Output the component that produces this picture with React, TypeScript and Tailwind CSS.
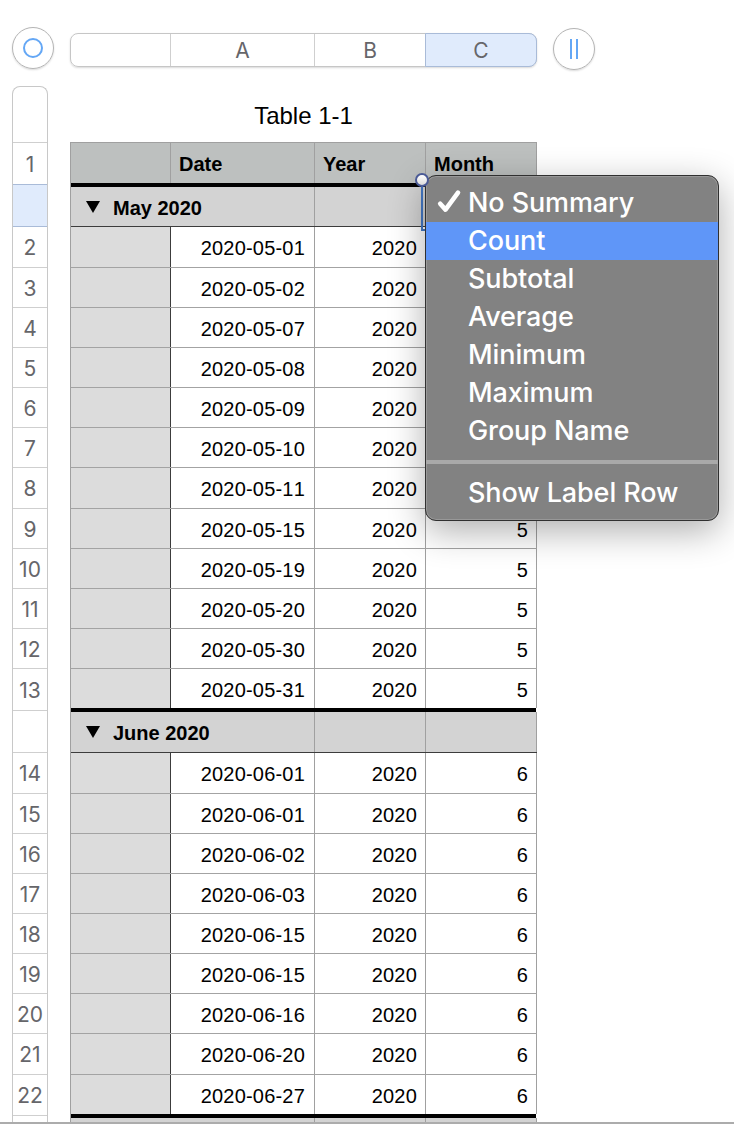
interface DataRow {
  n: number
  date: string
  year: number
  month: number
  // height of the table row
  h: string
  // height of the matching cell in the row-number gutter
  gutter: string
}

interface Group {
  name: string
  selected?: boolean
  h: string
  rows: DataRow[]
}

const groups: Group[] = [
  {
    name: 'May 2020',
    selected: true,
    h: 'h-10',
    rows: [
      { n: 2, date: '2020-05-01', year: 2020, month: 5, h: 'h-[41px]', gutter: 'h-[41px]' },
      { n: 3, date: '2020-05-02', year: 2020, month: 5, h: 'h-10', gutter: 'h-10' },
      { n: 4, date: '2020-05-07', year: 2020, month: 5, h: 'h-10', gutter: 'h-10' },
      { n: 5, date: '2020-05-08', year: 2020, month: 5, h: 'h-10', gutter: 'h-10' },
      { n: 6, date: '2020-05-09', year: 2020, month: 5, h: 'h-10', gutter: 'h-10' },
      { n: 7, date: '2020-05-10', year: 2020, month: 5, h: 'h-10', gutter: 'h-10' },
      { n: 8, date: '2020-05-11', year: 2020, month: 5, h: 'h-[41px]', gutter: 'h-[41px]' },
      { n: 9, date: '2020-05-15', year: 2020, month: 5, h: 'h-10', gutter: 'h-10' },
      { n: 10, date: '2020-05-19', year: 2020, month: 5, h: 'h-10', gutter: 'h-10' },
      { n: 11, date: '2020-05-20', year: 2020, month: 5, h: 'h-10', gutter: 'h-10' },
      { n: 12, date: '2020-05-30', year: 2020, month: 5, h: 'h-10', gutter: 'h-10' },
      { n: 13, date: '2020-05-31', year: 2020, month: 5, h: 'h-[39px]', gutter: 'h-[42px]' },
    ],
  },
  {
    name: 'June 2020',
    h: 'h-[41px]',
    rows: [
      { n: 14, date: '2020-06-01', year: 2020, month: 6, h: 'h-[41px]', gutter: 'h-[41px]' },
      { n: 15, date: '2020-06-01', year: 2020, month: 6, h: 'h-10', gutter: 'h-10' },
      { n: 16, date: '2020-06-02', year: 2020, month: 6, h: 'h-10', gutter: 'h-10' },
      { n: 17, date: '2020-06-03', year: 2020, month: 6, h: 'h-10', gutter: 'h-10' },
      { n: 18, date: '2020-06-15', year: 2020, month: 6, h: 'h-10', gutter: 'h-10' },
      { n: 19, date: '2020-06-15', year: 2020, month: 6, h: 'h-10', gutter: 'h-10' },
      { n: 20, date: '2020-06-16', year: 2020, month: 6, h: 'h-10', gutter: 'h-10' },
      { n: 21, date: '2020-06-20', year: 2020, month: 6, h: 'h-[41px]', gutter: 'h-[41px]' },
      { n: 22, date: '2020-06-27', year: 2020, month: 6, h: 'h-[39px]', gutter: 'h-[41px]' },
    ],
  },
]

const summaryItems = ['No Summary', 'Count', 'Subtotal', 'Average', 'Minimum', 'Maximum', 'Group Name']

// the open menu covers the month column down to this row
const LAST_COVERED_ROW = 8

function ColumnHeader() {
  return (
    <div className="ml-4 mt-[33px] flex h-[34px] w-[467px] rounded-[8px] border border-[#c6c6c6] font-['Inter',sans-serif] text-[21px] text-[#66666a] shadow-[0_1px_2px_rgba(0,0,0,0.15)]">
      <div className="w-[100px] border-r border-[#cfcfcf]" />
      <div className="flex w-36 items-center justify-center border-r border-[#cfcfcf] pt-0.5">A</div>
      <div className="flex w-[110px] items-center justify-center pt-0.5">B</div>
      <div className="-my-px -mr-px flex w-28 items-center justify-center rounded-r-[8px] border border-[#a9bbd8] bg-[#e0ebfc] pt-0.5">
        C
      </div>
    </div>
  )
}

function RowGutter() {
  return (
    <div className="ml-3 flex h-[1036px] w-9 flex-col overflow-hidden rounded-t-[8px] border-x border-t border-[#c8c8c8] font-['Inter',sans-serif] text-[21px] text-[#66666a] [font-kerning:none]">
      <div className="h-14 shrink-0 border-b border-[#cfcfcf]" />
      <GutterCell h="h-[42px]" label="1" />
      {groups.map((g) => (
        <div key={g.name} className="shrink-0">
          {g.selected ? (
            <div className="-mt-px h-[43px] border-y border-[#a9bbd8] bg-[#e0ebfc]" />
          ) : (
            <GutterCell h="h-[42px]" label="" />
          )}
          {g.rows.map((r) => (
            <GutterCell key={r.n} h={r.gutter} label={String(r.n)} />
          ))}
        </div>
      ))}
    </div>
  )
}

function GutterCell({ h, label }: { h: string; label: string }) {
  return (
    <div className={`${h} flex shrink-0 items-center justify-center border-b border-[#cfcfcf] pt-0.5`}>{label}</div>
  )
}

function GroupRow({ group }: { group: Group }) {
  return (
    <div className={`${group.h} flex border-b border-[#3c3c3c] bg-[#d3d3d3]`}>
      <div className="flex w-[244px] items-start border-r border-[#a0a0a0] pl-[15px] pt-1.5 text-[20px] font-bold">
        <svg className="mr-[13px] mt-2 h-[12px] w-[14px]" viewBox="0 0 14 12">
          <path d="M0 0h14L7 12z" />
        </svg>
        {group.name}
      </div>
      <div className="w-[111px] border-r border-[#a0a0a0]" />
      <div className="w-[111px] border-r border-[#a0a0a0]" />
    </div>
  )
}

function TableRow({ row, last }: { row: DataRow; last: boolean }) {
  return (
    <div className={`${row.h} flex text-right text-[20px] tracking-[0.2px] [font-kerning:none] ${last ? '' : 'border-b border-[#a3a3a3]'}`}>
      <div className="w-[100px] border-r border-[#3c3c3c] bg-[#dcdcdc]" />
      <div className="w-36 border-r border-[#a0a0a0] pr-[9px] pt-1.5">{row.date}</div>
      <div className="w-[111px] border-r border-[#a0a0a0] pr-2 pt-1.5">{row.year}</div>
      <div className="w-[111px] border-r border-[#a0a0a0] pr-2 pt-1.5">
        {row.n > LAST_COVERED_ROW && row.month}
      </div>
    </div>
  )
}

function Table() {
  return (
    <div className="ml-[22px] h-[1036px] w-[467px] overflow-hidden font-['Liberation_Sans',sans-serif] text-black">
      <div className="flex h-14 items-center justify-center pt-[3px] text-[24px]">Table 1-1</div>
      <div className="border-l border-t border-[#a0a0a0]">
        <div className="flex h-10 bg-[#bdc0bf] text-[20px] font-bold">
          <div className="w-[100px] border-r border-[#a0a0a0]" />
          <div className="w-36 border-r border-[#a0a0a0] pl-2 pt-1.5">Date</div>
          <div className="w-[111px] border-r border-[#a0a0a0] pl-2 pt-1.5">Year</div>
          <div className="w-[111px] border-r border-[#a0a0a0] pl-2 pt-1.5">Month</div>
        </div>
        <div className="mr-px h-1 bg-black" />
        {groups.map((g) => (
          <div key={g.name}>
            <GroupRow group={g} />
            {g.rows.map((r, i) => (
              <TableRow key={r.n} row={r} last={i === g.rows.length - 1} />
            ))}
            <div className="mr-px h-1 bg-black" />
          </div>
        ))}
        <div className="flex h-10 bg-[#d3d3d3]">
          <div className="w-[244px] border-r border-[#a0a0a0]" />
          <div className="w-[111px] border-r border-[#a0a0a0]" />
          <div className="w-[111px] border-r border-[#a0a0a0]" />
        </div>
      </div>
    </div>
  )
}

function MenuItem({ label, checked, active }: { label: string; checked?: boolean; active?: boolean }) {
  return (
    <div className={`flex h-[38px] items-center pl-[11px] ${active ? 'bg-[#5f96f8]' : ''}`}>
      <div className="w-[31px]">
        {checked && (
          <svg className="h-[24px] w-[24px] overflow-visible" viewBox="0 0 24 24" fill="none" stroke="white" strokeWidth={4.6} strokeLinecap="round" strokeLinejoin="round">
            <path d="M3.200 12.700L8.500 18.600L21 1.600" />
          </svg>
        )}
      </div>
      {label}
    </div>
  )
}

function SummaryMenu() {
  return (
    <div className="absolute left-[425px] top-[175px] h-[346px] w-[294px] rounded-[11px] border border-[#303030] bg-[#828282] pt-2 font-['Inter',sans-serif] text-[27px] font-medium tracking-[-0.1px] text-white shadow-[0_10px_36px_rgba(0,0,0,0.32),inset_0_0_0_1px_rgba(255,255,255,0.18)]">
      {summaryItems.map((label, i) => (
        <MenuItem key={label} label={label} checked={i === 0} active={label === 'Count'} />
      ))}
      <div className="my-[10px] h-1 bg-[#a9a9a9]" />
      <MenuItem label="Show Label Row" />
    </div>
  )
}

export default function App() {
  return (
    <div className="relative h-[1128px] w-[734px] overflow-hidden bg-white">
      <div className="flex h-[86px] items-start">
        <div className="ml-3 mt-[27px] flex h-[42px] w-[42px] items-center justify-center rounded-full border border-[#b4b4b4] shadow-[0_1px_2px_rgba(0,0,0,0.15)]">
          <div className="h-5 w-5 rounded-full border-2 border-[#64a7f5]" />
        </div>
        <ColumnHeader />
        <div className="ml-4 mt-[28px] flex h-[42px] w-[42px] items-center justify-center gap-1 rounded-full border border-[#b4b4b4] shadow-[0_1px_2px_rgba(0,0,0,0.15)]">
          <div className="h-5 w-0.5 bg-[#64a7f5]" />
          <div className="h-5 w-0.5 bg-[#64a7f5]" />
        </div>
      </div>
      <div className="flex">
        <RowGutter />
        <Table />
      </div>
      <div className="h-0.5 bg-[#acacac]" />

      {/* selected summary cell */}
      <div className="absolute left-[421px] top-[180px] h-[51px] w-20 border-2 border-[#4377c4]" />
      <SummaryMenu />
      <div className="absolute left-[415px] top-[173px] h-[14px] w-[14px] rounded-full border-2 border-[#4a5a96] bg-linear-to-b from-white to-[#dcdcdc]" />
    </div>
  )
}
